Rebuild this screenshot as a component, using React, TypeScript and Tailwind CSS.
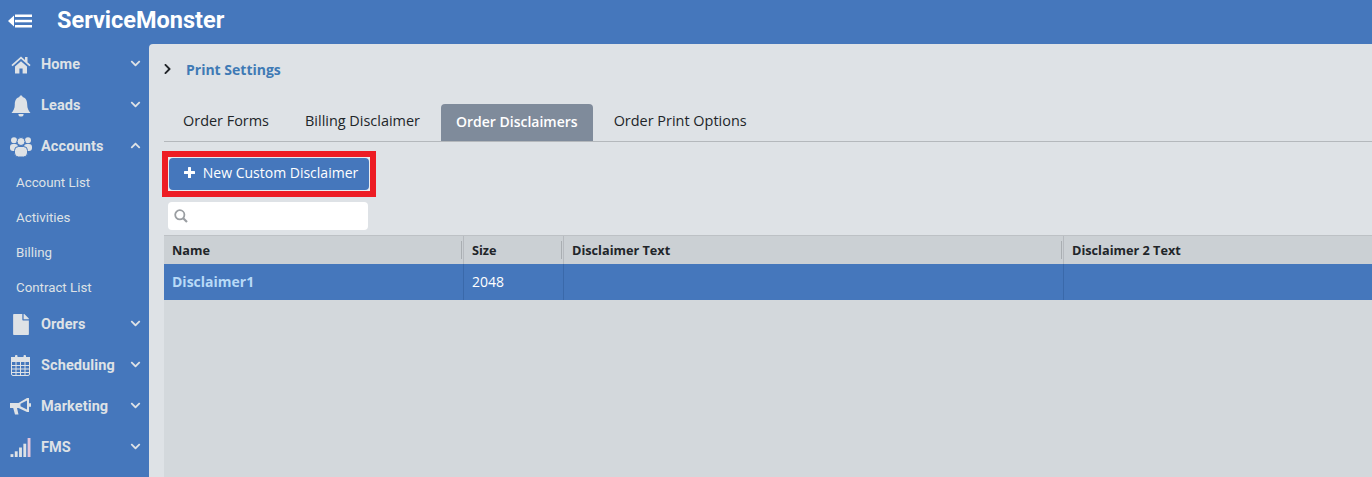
import { FaFile, FaChevronDown, FaChevronUp, FaChevronRight } from "react-icons/fa";
import type { ComponentType, ReactNode } from "react";

const HomeIcon = ({ className }: { className?: string }) => (
  <svg viewBox="0 0 20 18" className={className} fill="#dee2e6">
    <rect x="14" y="1" width="2.5" height="5" />
    <path d="M1 9.7 10 1.7 19 9.7" fill="none" stroke="#dee2e6" strokeWidth="1.8" />
    <path d="M4 10.5 10 5.2 16 10.5V17.5H11.6V12.5H8.4V17.5H4Z" />
  </svg>
);

const BellIcon = ({ className }: { className?: string }) => (
  <svg viewBox="0 0 20 22" className={className} fill="#dee2e6">
    <path d="M10 .5c1 0 1.6.6 1.6 1.6C15 3 16.2 6 16.2 9.5c0 4 1.3 6 3.3 8.5H.5C2.500 15.500 3.800 13.500 3.800 9.500 3.800 6 5 3 8.400 2.100 8.400 1.100 9 .5 10 .5Z" />
    <path d="M7.400 19h5.200a2.600 2.600 0 0 1-5.200 0Z" />
  </svg>
);

const UsersIcon = ({ className }: { className?: string }) => (
  <svg viewBox="0 0 22 21" className={className} fill="#dee2e6">
    <circle cx="4" cy="4.300" r="3" />
    <circle cx="18" cy="4.300" r="3" />
    <rect x="0" y="8" width="8" height="7" rx="3" />
    <rect x="14" y="8" width="8" height="7" rx="3" />
    <circle cx="11" cy="5.500" r="4" stroke="#4577bc" />
    <rect x="4.500" y="10.500" width="13" height="10.500" rx="4" stroke="#4577bc" />
  </svg>
);

const CalendarIcon = ({ className }: { className?: string }) => (
  <svg viewBox="0 0 19 21" className={className} fill="none" stroke="#dee2e6">
    <rect x="0.500" y="2.500" width="18" height="18" rx="1.500" />
    <rect x="0.500" y="2.500" width="18" height="4" fill="#dee2e6" />
    <rect x="4" y="0" width="2.500" height="4.500" rx="1" fill="#dee2e6" stroke="none" />
    <rect x="12.500" y="0" width="2.500" height="4.500" rx="1" fill="#dee2e6" stroke="none" />
    <path d="M5 7v13M9.500 7v13M14 7v13M1 10.500h17M1 14h17M1 17.500h17" />
  </svg>
);

const MegaphoneIcon = ({ className }: { className?: string }) => (
  <svg viewBox="0 0 21 20" className={className} fill="#dee2e6">
    <path fillRule="evenodd" d="M0 6h8.500L17 1h2v14h-2L8.500 11H7l1.500 6.500H5L3.200 11H0ZM10.500 6.800V9.200L17 12.500V3.500Z" />
    <rect x="19" y="6" width="2" height="4" rx="1" />
  </svg>
);

const SignalIcon = ({ className }: { className?: string }) => (
  <svg viewBox="0 0 21 20" className={className}>
    <rect x="0" y="17" width="3" height="3" fill="#dee2e6" />
    <rect x="4.500" y="14" width="3" height="6" fill="#dee2e6" />
    <rect x="9" y="10" width="3" height="10" fill="#dee2e6" />
    <rect x="13.500" y="6" width="3" height="14" fill="#dee2e6" />
    <rect x="18" y="0" width="3" height="20" fill="#e3c6dc" />
  </svg>
);

const MenuIcon = () => (
  <svg viewBox="0 0 24 14" className="w-6 h-3.5" fill="#fff">
    <path d="M0 7l6-5.500v11z" />
    <rect x="7" y="0.500" width="17" height="2.500" />
    <rect x="7" y="5.800" width="17" height="2.500" />
    <rect x="7" y="11" width="17" height="2.500" />
  </svg>
);

const SearchIcon = () => (
  <svg viewBox="0 0 14 14" className="w-[14px] h-[14px]" fill="none" stroke="#9a9ea2" strokeWidth="1.800">
    <circle cx="5.800" cy="5.800" r="4.600" />
    <path d="M9.200 9.200 13 13" strokeWidth="2.200" />
  </svg>
);

const PlusIcon = () => (
  <svg viewBox="0 0 11 11" className="w-[11px] h-[11px]" fill="#fff">
    <rect x="4" y="0" width="3" height="11" rx="0.500" />
    <rect x="0" y="4" width="11" height="3" rx="0.500" />
  </svg>
);

type IconType = ComponentType<{ className?: string }>;

const NavItem = ({ icon: Icon, label, open, iconClass }: { icon: IconType; label: string; open?: boolean; iconClass: string }) => {
  const Chevron = open ? FaChevronUp : FaChevronDown;
  return (
    <div className="h-[41px] flex items-center text-[#dee2e6]">
      <div className="w-[41px] flex justify-center shrink-0">
        <Icon className={iconClass} />
      </div>
      <span className="flex-1 text-[14.5px] font-bold font-['Roboto',sans-serif] tracking-[0.1px]">{label}</span>
      <Chevron className="w-[11px] h-[11px] mr-[8px] mb-[3px]" />
    </div>
  );
};

const SubItem = ({ children }: { children: ReactNode }) => (
  <div className="h-[35px] flex items-center pl-4 pt-px text-[13.3px] text-[#dee2e6] font-['Roboto',sans-serif]">{children}</div>
);

const Tab = ({ label, active }: { label: string; active?: boolean }) => (
  <div
    className={
      active
        ? "h-[37px] px-[15px] pb-[3px] flex items-center rounded-t-[4px] bg-[#7f8b9b] text-[14px] text-white font-semibold"
        : "h-[37px] px-[15px] pb-[3px] flex items-center text-[14.45px] text-[#212529] font-medium"
    }
  >
    {label}
  </div>
);

const columns = [
  { name: "Name", w: "w-[300px]" },
  { name: "Size", w: "w-[100px]" },
  { name: "Disclaimer Text", w: "w-[500px]" },
  { name: "Disclaimer 2 Text", w: "flex-1" },
];

export default function App() {
  return (
    <div className="w-[1372px] h-[477px] overflow-hidden bg-[#4577bc] font-['Open_Sans',sans-serif] flex flex-col">
      <header className="h-[44px] shrink-0 flex items-center text-white">
        <div className="w-[57px] pl-2 pb-0.5">
          <MenuIcon />
        </div>
        <span className="text-[23.5px] font-bold font-['Roboto',sans-serif] pb-[2px]">ServiceMonster</span>
      </header>
      <div className="flex flex-1 min-h-0">
        <aside className="w-[149px] shrink-0">
          <NavItem icon={HomeIcon} label="Home" iconClass="w-[20px] h-[18px]" />
          <NavItem icon={BellIcon} label="Leads" iconClass="w-[20px] h-[22px]" />
          <NavItem icon={UsersIcon} label="Accounts" open iconClass="w-[22px] h-[21px]" />
          <div className="-mt-[2px] -mb-px">
            <SubItem>Account List</SubItem>
            <SubItem>Activities</SubItem>
            <SubItem>Billing</SubItem>
            <SubItem>Contract List</SubItem>
          </div>
          <NavItem icon={FaFile} label="Orders" iconClass="w-[18px] h-[21px]" />
          <NavItem icon={CalendarIcon} label="Scheduling" iconClass="w-[19px] h-[21px]" />
          <NavItem icon={MegaphoneIcon} label="Marketing" iconClass="w-[21px] h-[20px]" />
          <NavItem icon={SignalIcon} label="FMS" iconClass="w-[21px] h-[19px]" />
        </aside>
        <main className="flex-1 min-w-0 bg-[#dee2e6] rounded-tl-[4px] flex flex-col pl-[15px]">
          <div className="h-[60px] shrink-0 flex items-center pb-[10px]">
            <FaChevronRight className="w-[11px] h-[12px] -ml-[2px] text-[#212529]" />
            <span className="ml-[13px] text-[14px] font-bold text-[#3f7ab5]">Print Settings</span>
          </div>
          <div className="flex gap-[6px] pl-[4px] border-b border-[#b4b8bc] ml-0 h-[38px] shrink-0">
            <Tab label="Order Forms" />
            <Tab label="Billing Disclaimer" />
            <Tab label="Order Disclaimers" active />
            <Tab label="Order Print Options" />
          </div>
          <div className="mt-[9px] -ml-[2px] w-[214px] h-[46px] shrink-0 border-[6px] border-[#ed1c24] bg-[#e9ecef] p-px">
            <button className="w-full h-full pl-[4px] pb-[3px] rounded-[4px] bg-[#4577bc] text-white text-[14px] flex items-center justify-center gap-[8px]">
              <PlusIcon />
              New Custom Disclaimer
            </button>
          </div>
          <div className="mt-[5px] ml-[4px] w-[200px] h-[28px] shrink-0 rounded-[4px] bg-white flex items-center pl-[6px]">
            <SearchIcon />
          </div>
          <div className="mt-[5px] flex-1 flex flex-col bg-[#d3d8dc]">
            <div className="h-[29px] shrink-0 flex bg-[#cbd0d4] border-t border-[#bdc1c5] text-[12.7px] font-bold text-[#212529]">
              {columns.map((c, i) => (
                <div key={c.name} className={`${c.w} h-full relative flex items-center pl-2 pt-px ${i < 3 ? "border-r border-[#b6babf]" : ""}`}>
                  {c.name}
                  {i < 3 && <span className="absolute right-[1px] top-[5px] h-[18px] w-px bg-[#a9aeb2]" />}
                </div>
              ))}
            </div>
            <div className="h-[36px] shrink-0 flex bg-[#4577bc] text-[14px]">
              <div className="w-[300px] flex items-center pl-2 pb-px font-bold text-[#b8daf7] border-r border-[#3a69aa]">Disclaimer1</div>
              <div className="w-[100px] flex items-center pl-2 pb-px text-white border-r border-[#3a69aa]">2048</div>
              <div className="w-[500px] border-r border-[#3a69aa]" />
              <div className="flex-1" />
            </div>
          </div>
        </main>
      </div>
    </div>
  );
}
